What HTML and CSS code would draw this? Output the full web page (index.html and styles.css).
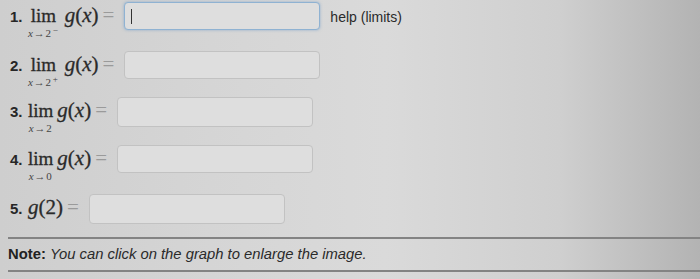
FILE: index.html
```html
<!DOCTYPE html>
<html>
<head>
<meta charset="utf-8">
<link rel="stylesheet" href="styles.css">
</head>
<body>
<div class="page">
  <div class="row r1">
    <span class="num">1.</span>
    <span class="lim"><span class="limw">lim</span><span class="sub"><i>x</i>→2<span class="sup">−</span></span></span>
    <span class="expr"><i>g</i>(<i>x</i>)</span>
    <span class="eq">=</span>
    <span class="box focus"><span class="caret"></span></span>
    <span class="help">help (limits)</span>
  </div>
  <div class="row r2">
    <span class="num">2.</span>
    <span class="lim"><span class="limw">lim</span><span class="sub"><i>x</i>→2<span class="sup">+</span></span></span>
    <span class="expr"><i>g</i>(<i>x</i>)</span>
    <span class="eq">=</span>
    <span class="box"></span>
  </div>
  <div class="row r3">
    <span class="num">3.</span>
    <span class="lim"><span class="limw">lim</span><span class="sub"><i>x</i>→2</span></span>
    <span class="expr"><i>g</i>(<i>x</i>)</span>
    <span class="eq">=</span>
    <span class="box"></span>
  </div>
  <div class="row r4">
    <span class="num">4.</span>
    <span class="lim"><span class="limw">lim</span><span class="sub"><i>x</i>→0</span></span>
    <span class="expr"><i>g</i>(<i>x</i>)</span>
    <span class="eq">=</span>
    <span class="box"></span>
  </div>
  <div class="row r5">
    <span class="num">5.</span>
    <span class="expr"><i>g</i>(2)</span>
    <span class="eq">=</span>
    <span class="box"></span>
  </div>
  <div class="note"><b>Note:</b> <i>You can click on the graph to enlarge the image.</i></div>
</div>
</body>
</html>
```

FILE: styles.css
```css
html, body {
  margin: 0;
  padding: 0;
  height: 100%;
}
body {
  background: linear-gradient(90deg, #cecece 0%, #d5d5d5 30%, #dadada 55%, #cfcfcf 80%, #b3b3b3 100%);
  font-family: "Liberation Sans", Arial, sans-serif;
  color: #222;
  overflow: hidden;
}
.page {
  padding: 2px 0 0 10px;
}
.row {
  display: flex;
  align-items: flex-start;
}
.r1 { height: 49px; }
.r2 { height: 46px; }
.r3 { height: 48px; }
.r4 { height: 49px; }
.r5 { height: 43px; }
.num {
  font-weight: bold;
  font-size: 15px;
  color: #262626;
  margin-top: 6px;
  width: 18px;
}
.lim {
  display: inline-flex;
  flex-direction: column;
  align-items: center;
  font-family: "Liberation Serif", "Times New Roman", serif;
  margin-right: 4px;
}
.r1 .lim, .r2 .lim { margin-right: 6px; }
.limw {
  font-size: 19px;
  line-height: 19px;
  margin-top: 4px;
  color: #2a2a2a;
  -webkit-text-stroke: 0.3px #2a2a2a;
}
.sub {
  display: flex;
  align-items: flex-end;
  font-size: 11px;
  line-height: 12px;
  margin-top: 2px;
  color: #444;
  white-space: nowrap;
  letter-spacing: 0.8px;
}
.sup {
  font-size: 9px;
  line-height: 7px;
  align-self: flex-start;
  margin-left: 1px;
}
.expr {
  font-family: "Liberation Serif", "Times New Roman", serif;
  font-size: 21px;
  margin-top: 2px;
  line-height: 22px;
  color: #2a2a2a;
  -webkit-text-stroke: 0.3px #2a2a2a;
}
.eq {
  font-family: "Liberation Serif", serif;
  font-size: 21px;
  color: #9a9a9a;
  margin: 2px 10px 0 4px;
  line-height: 22px;
}
.box {
  display: block;
  width: 194px;
  height: 26px;
  border: 1px solid #c2c2c2;
  border-radius: 4px;
  background: #dedede;
  position: relative;
}
.r3 .box, .r5 .box { height: 28px; }
.box.focus {
  border-color: #8fb2d2;
  box-shadow: 0 0 3px rgba(100, 150, 200, 0.6);
}
.caret {
  position: absolute;
  left: 6px;
  top: 6px;
  width: 1px;
  height: 15px;
  background: #333;
}
.help {
  font-size: 14px;
  color: #2a2a2a;
  margin: 7px 0 0 10px;
}
.note {
  margin-left: -2px;
  border-top: 2px solid #838383;
  border-bottom: 2px solid #838383;
  padding: 7px 0 7px 0;
  line-height: 17px;
  font-size: 14.8px;
  color: #222;
}
.note i { color: #2a2a2a; }
```
